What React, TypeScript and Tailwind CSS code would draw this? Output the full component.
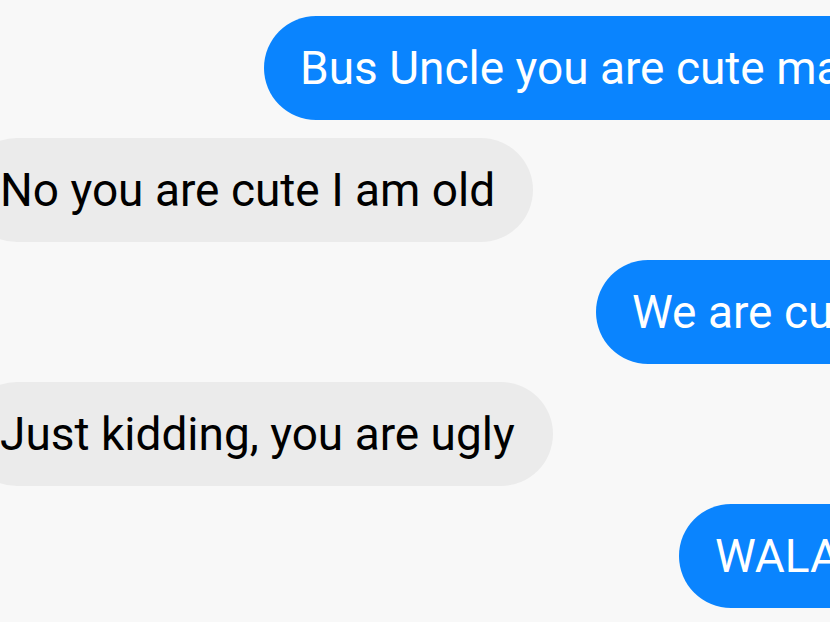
const messages = [
  { mine: true, text: "Bus Uncle you are cute man", offset: "pl-[264px]" },
  { mine: false, text: "No you are cute I am old" },
  { mine: true, text: "We are cute", offset: "pl-[596px]" },
  { mine: false, text: "Just kidding, you are ugly" },
  { mine: true, text: "WALAO", offset: "pl-[679px]" },
];

export default function App() {
  return (
    <div className="w-[830px] h-[622px] overflow-hidden bg-[#f8f8f8] pt-[16px] font-['Roboto',sans-serif]">
      <div className="flex flex-col gap-[18px]">
        {messages.map((m, i) =>
          m.mine ? (
            <div key={i} className={`flex ${m.offset}`}>
              <div className="shrink-0 whitespace-nowrap rounded-full bg-[#0a84fe] text-white h-[104px] flex items-center pl-[36px] pr-[40px] text-[46px]">
                {m.text}
              </div>
            </div>
          ) : (
            <div key={i} className="flex ml-[-35px]">
              <div className="shrink-0 whitespace-nowrap rounded-full bg-[#ebebeb] text-black h-[104px] flex items-center pl-[35px] pr-[38px] text-[46px]">
                {m.text}
              </div>
            </div>
          )
        )}
      </div>
    </div>
  );
}
